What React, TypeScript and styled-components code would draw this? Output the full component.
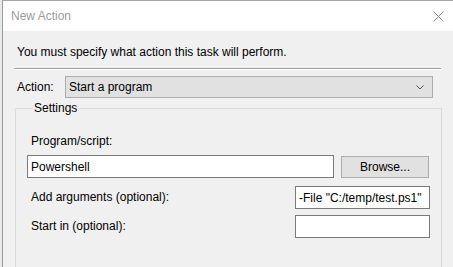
import { createGlobalStyle, styled } from "styled-components";

const GlobalStyle = createGlobalStyle`
  html, body {
    margin: 0;
    padding: 0;
    overflow: hidden;
    background: #e6ebe8;
    font-family: "Liberation Sans", Arial, sans-serif;
  }
`;

const Window = styled.div`
  margin-left: 2px;
  width: 450px;
  height: 266px;
  border-left: 1px solid #9a9a9a;
  border-top: 1px solid #a4a4a4;
  background: #f0f0f0;
  display: flex;
  flex-direction: column;
  overflow: hidden;
`;

const TitleBar = styled.div`
  height: 30px;
  background: #ffffff;
  display: flex;
  align-items: center;
  padding-left: 8px;
  flex-shrink: 0;
`;

const Title = styled.div`
  flex: 1;
  color: #9b9b9b;
  font-size: 12px;
`;

const CloseBtn = styled.div`
  width: 11px;
  height: 11px;
  margin-right: 9px;
  display: flex;
`;

const Body = styled.div`
  flex: 1;
  padding-left: 11px;
  display: flex;
  flex-direction: column;
`;

const Text = styled.div`
  font-size: 12px;
  color: #000;
  white-space: nowrap;
`;

const Intro = styled(Text)`
  padding: 14px 0 0 3px;
  height: 23px;
`;

const Separator = styled.div`
  height: 1px;
  background: #a0a0a0;
  border-bottom: 1px solid #ffffff;
  width: 427px;
`;

const ActionRow = styled.div`
  display: flex;
  align-items: center;
  margin-top: 6px;
  height: 22px;
`;

const ActionLabel = styled(Text)`
  width: 48px;
  padding-left: 3px;
`;

const Select = styled.div`
  width: 368px;
  height: 22px;
  box-sizing: border-box;
  border: 1px solid #adadad;
  background: #e1e1e1;
  display: flex;
  align-items: center;
  padding: 0 8px 0 3px;
  font-size: 12px;
  justify-content: space-between;
`;

const Group = styled.fieldset`
  margin: 3px 0 0 1px;
  width: 427px;
  box-sizing: border-box;
  border: 1px solid #dcdcdc;
  border-bottom: none;
  padding: 19px 0 40px 11px;
  flex: 1;
`;

const Legend = styled.legend`
  font-size: 12px;
  padding: 0 1px;
  margin-left: 6px;
  color: #000;
`;

const FieldLabel = styled(Text)`
  padding-left: 4px;
  height: 15px;
`;

const Row = styled.div<{ $top: number }>`
  display: flex;
  align-items: center;
  margin-top: ${(p) => p.$top}px;
`;

const Input = styled.div<{ $width: number }>`
  width: ${(p) => p.$width}px;
  height: 23px;
  box-sizing: border-box;
  border: 1px solid #7a7a7a;
  background: #fff;
  font-size: 12px;
  display: flex;
  align-items: center;
  padding-left: 3px;
  white-space: nowrap;
  overflow: hidden;
`;

const Button = styled.div`
  margin-left: 7px;
  width: 88px;
  height: 22px;
  box-sizing: border-box;
  border: 1px solid #adadad;
  background: #e1e1e1;
  font-size: 12px;
  display: flex;
  align-items: center;
  justify-content: center;
`;

const OptionRow = styled.div<{ $top: number }>`
  display: flex;
  align-items: center;
  justify-content: space-between;
  width: 403px;
  margin-top: ${(p) => p.$top}px;
`;

export default function App() {
  return (
    <>
      <GlobalStyle />
      <Window>
        <TitleBar>
          <Title>New Action</Title>
          <CloseBtn>
            <svg width="11" height="11" viewBox="0 0 11 11">
              <path d="M0.5 0.5 L10.5 10.5 M10.5 0.5 L0.5 10.5" stroke="#8a8a8a" strokeWidth="1" fill="none" />
            </svg>
          </CloseBtn>
        </TitleBar>
        <Body>
          <Intro>You must specify what action this task will perform.</Intro>
          <Separator />
          <ActionRow>
            <ActionLabel>Action:</ActionLabel>
            <Select>
              <span>Start a program</span>
              <svg width="8" height="5" viewBox="0 0 8 5">
                <path d="M0.5 0.5 L4 4 L7.5 0.5" stroke="#555" strokeWidth="1" fill="none" />
              </svg>
            </Select>
          </ActionRow>
          <Group>
            <Legend>Settings</Legend>
            <FieldLabel>Program/script:</FieldLabel>
            <Row $top={6}>
              <Input $width={307}>Powershell</Input>
              <Button>Browse...</Button>
            </Row>
            <OptionRow $top={8}>
              <FieldLabel>Add arguments (optional):</FieldLabel>
              <Input $width={135}>-File "C:/temp/test.ps1"</Input>
            </OptionRow>
            <OptionRow $top={6}>
              <FieldLabel>Start in (optional):</FieldLabel>
              <Input $width={135} />
            </OptionRow>
          </Group>
        </Body>
      </Window>
    </>
  );
}
